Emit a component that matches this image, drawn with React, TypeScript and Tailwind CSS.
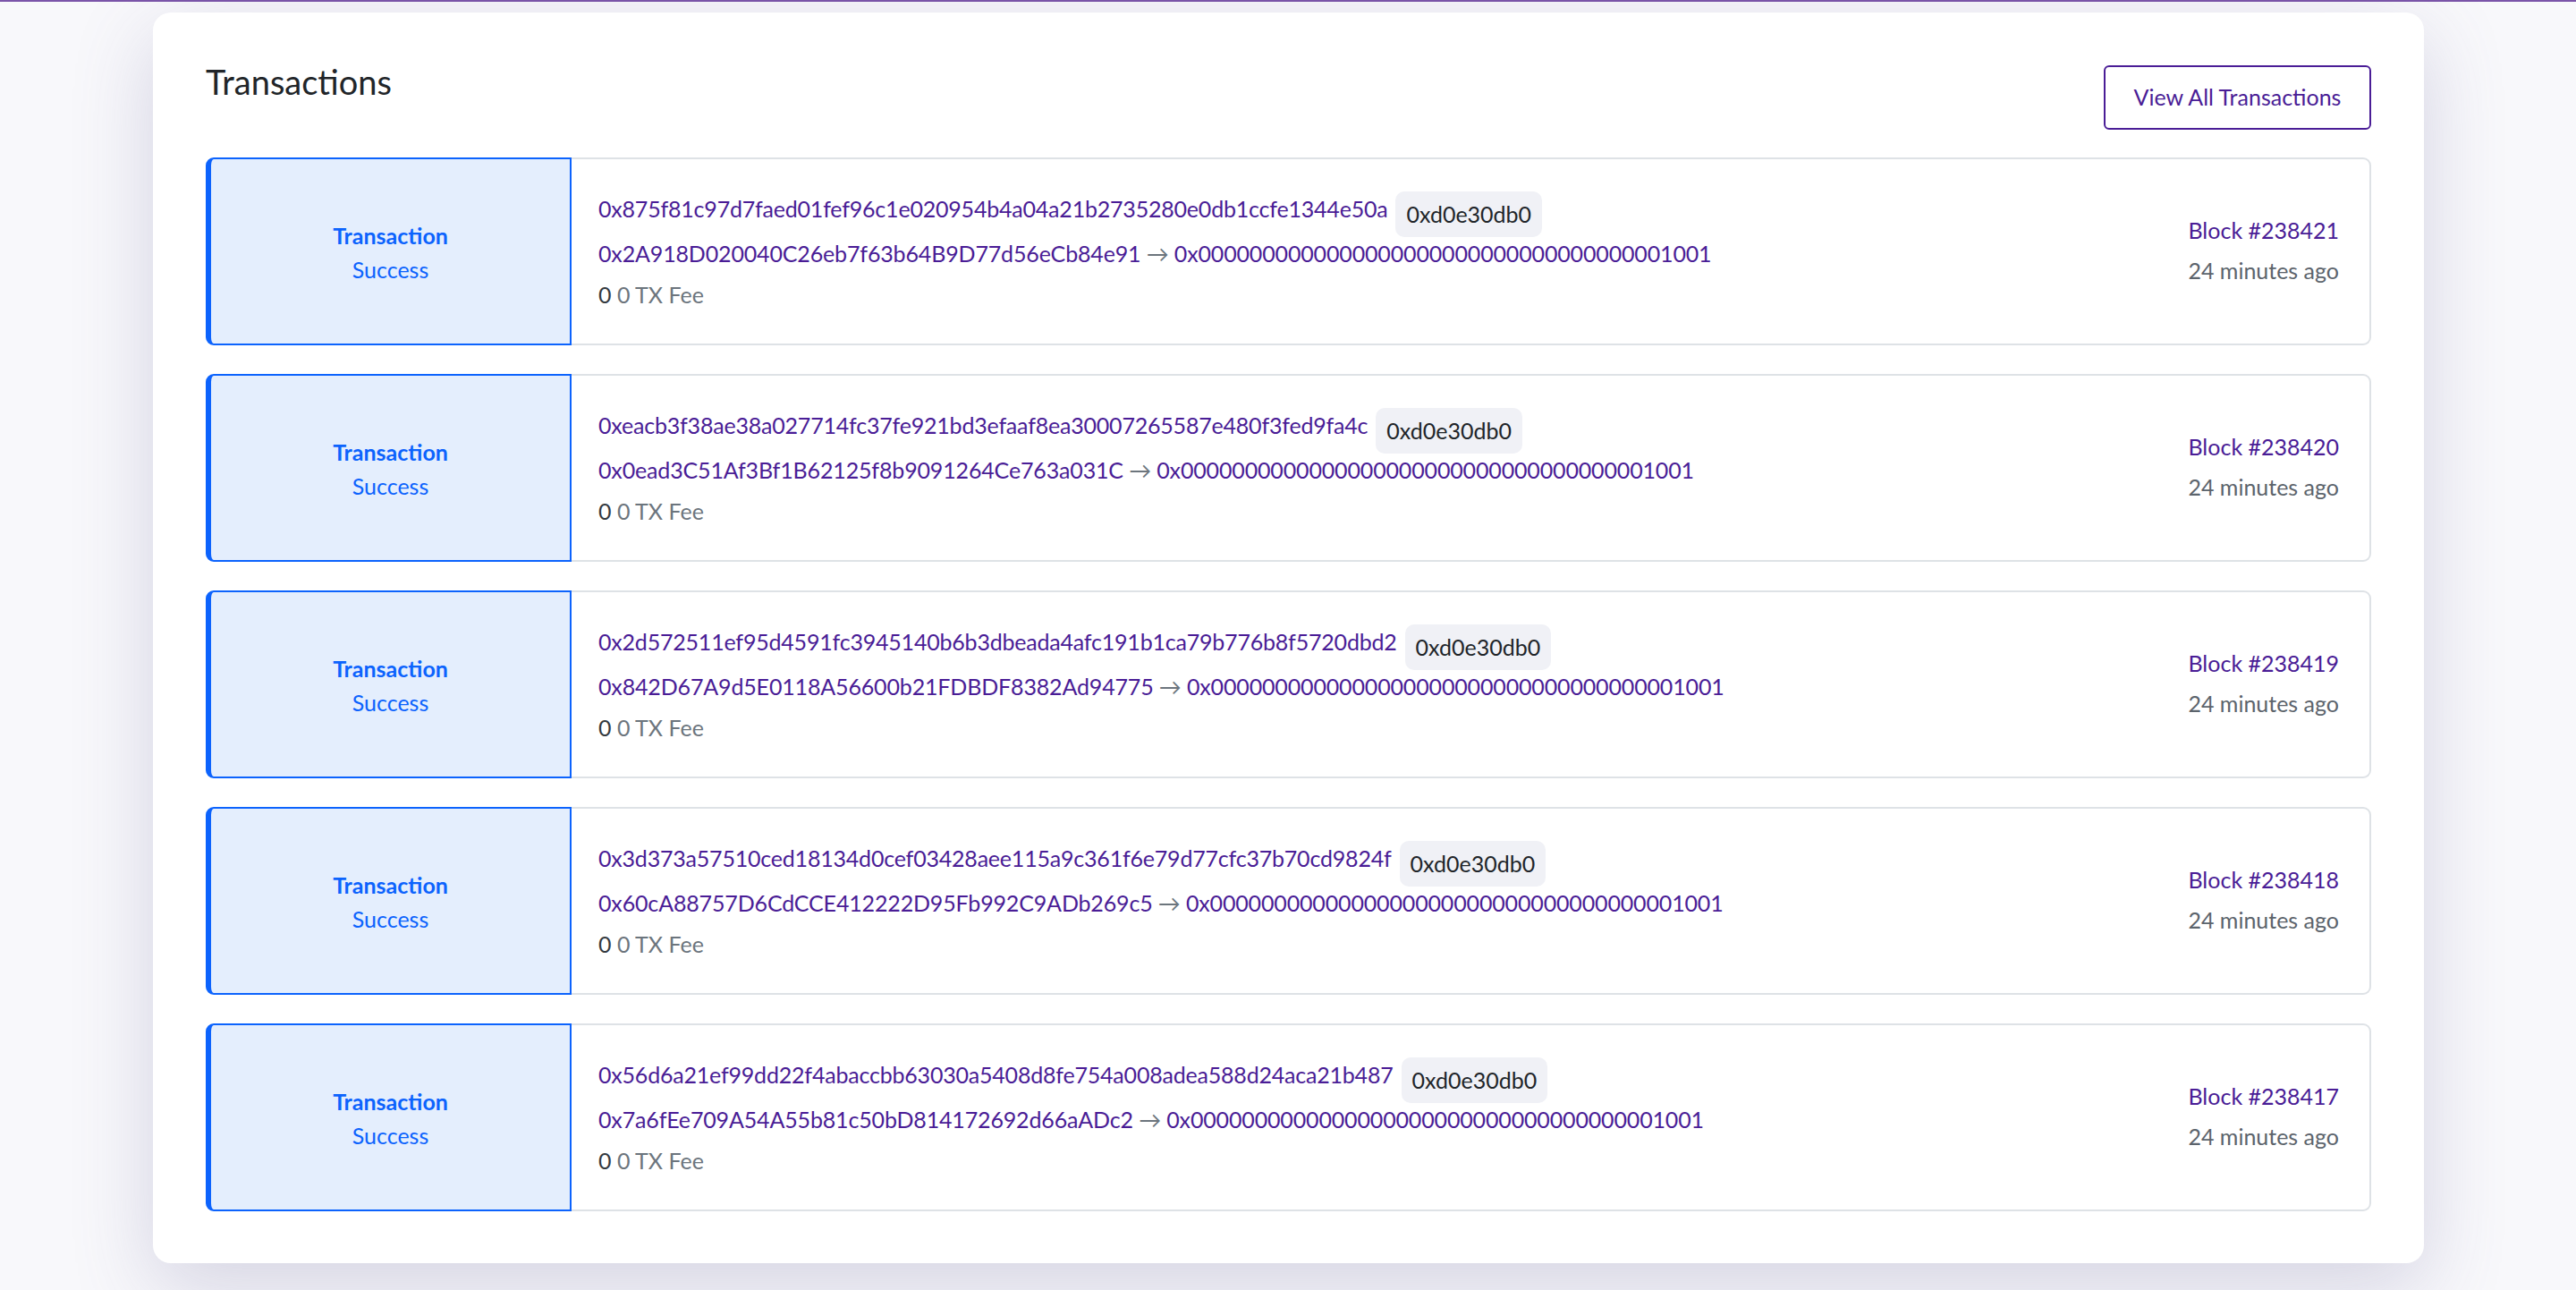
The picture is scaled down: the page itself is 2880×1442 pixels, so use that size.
import React from "react";

const TO_ADDR = "0x0000000000000000000000000000000000001001";

const TXS = [
  {
    hash: "0x875f81c97d7faed01fef96c1e020954b4a04a21b2735280e0db1ccfe1344e50a",
    from: "0x2A918D020040C26eb7f63b64B9D77d56eCb84e91",
    block: 238421,
  },
  {
    hash: "0xeacb3f38ae38a027714fc37fe921bd3efaaf8ea30007265587e480f3fed9fa4c",
    from: "0x0ead3C51Af3Bf1B62125f8b9091264Ce763a031C",
    block: 238420,
  },
  {
    hash: "0x2d572511ef95d4591fc3945140b6b3dbeada4afc191b1ca79b776b8f5720dbd2",
    from: "0x842D67A9d5E0118A56600b21FDBDF8382Ad94775",
    block: 238419,
  },
  {
    hash: "0x3d373a57510ced18134d0cef03428aee115a9c361f6e79d77cfc37b70cd9824f",
    from: "0x60cA88757D6CdCCE412222D95Fb992C9ADb269c5",
    block: 238418,
  },
  {
    hash: "0x56d6a21ef99dd22f4abaccbb63030a5408d8fe754a008adea588d24aca21b487",
    from: "0x7a6fEe709A54A55b81c50bD814172692d66aADc2",
    block: 238417,
  },
];

function TxRow({ hash, from, block }: { hash: string; from: string; block: number }) {
  return (
    <div className="flex h-[210px]">
      {/* status box */}
      <div className="w-[409px] shrink-0 flex flex-col items-center justify-center pt-[3px] border-2 border-l-[6px] border-[#0c63fd] rounded-l-[9px] bg-[#e4eefd] text-[#0c63fd] text-[25px] leading-[37.5px]">
        <span className="font-bold">Transaction</span>
        <span>Success</span>
      </div>

      <div className="flex-1 flex items-center border-2 border-l-0 border-[#dee2e6] rounded-r-[9px] pl-[30px] pr-[34px]">
        <div className="flex-1 flex flex-col text-[25px] leading-[37.5px]">
          <div className="flex items-start gap-[9px]">
            <a href="#" className="text-[#4a1d96] pt-[1px] tracking-[-0.2px]">{hash}</a>
            <span className="bg-[#f0f1f6] rounded-[10px] px-[12px] py-[7px] text-[#212529]">0xd0e30db0</span>
          </div>
          <div className="text-[#4a1d96] tracking-[-0.15px]">
            <a href="#">{from}</a>
            <span className="text-[#6c757d]"> → </span>
            <a href="#">{TO_ADDR}</a>
          </div>
          <div className="mt-[8px]">
            <span className="text-[#343a40]">0</span>
            <span className="text-[#6c757d]"> 0 TX Fee</span>
          </div>
        </div>

        <div className="flex flex-col items-end text-[25px] leading-[37.5px] pb-[2px]">
          <a href="#" className="text-[#4a1d96]">Block #{block}</a>
          <span className="mt-[8px] text-[#5c646c]">24 minutes ago</span>
        </div>
      </div>
    </div>
  );
}

export default function App() {
  return (
    <div
      className="min-h-[1442px] bg-[#f8f8fb] overflow-hidden"
      style={{ fontFamily: "Lato, 'Open Sans', 'Noto Sans', sans-serif" }}
    >
      <div className="h-[2px] bg-[#7b55a9]" />
      <div className="pl-[171px] pt-[12px]">
        <div className="w-[2539px] bg-white rounded-[20px] px-[59px] pt-[54px] pb-[58px] shadow-[0_28px_90px_rgba(100,95,150,0.24)]">
          <div className="flex items-start justify-between">
            <h4 className="text-[38px] leading-[46px] text-[#212529]">Transactions</h4>
            <button className="mt-[5px] w-[299px] h-[72px] border-2 border-[#4a1d96] rounded-[6px] text-[25px] text-[#4a1d96]">
              View All Transactions
            </button>
          </div>

          <div className="mt-[31px] flex flex-col gap-[32px]">
            {TXS.map((t) => (
              <TxRow key={t.block} {...t} />
            ))}
          </div>
        </div>
      </div>
    </div>
  );
}
